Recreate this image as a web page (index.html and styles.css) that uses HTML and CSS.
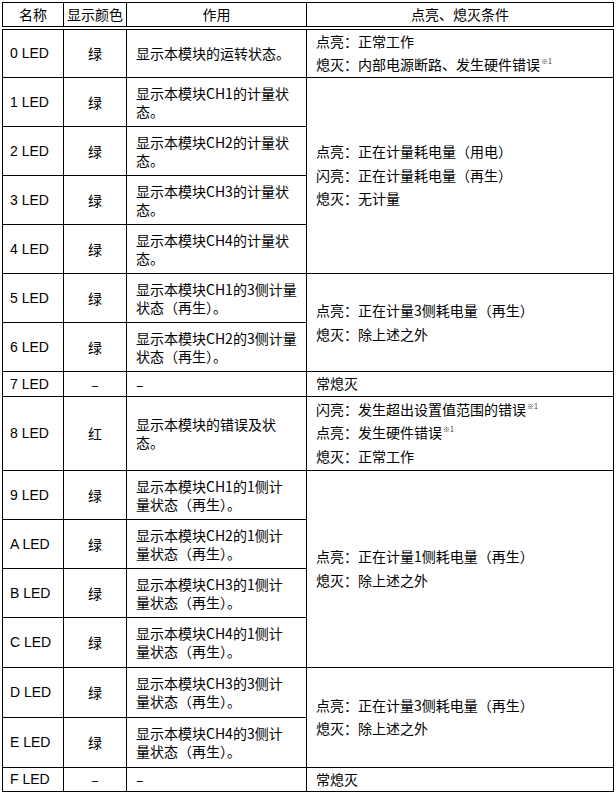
FILE: index.html
```html
<!DOCTYPE html>
<html lang="zh-CN">
<head>
<meta charset="utf-8">
<title>LED 显示</title>
<link rel="stylesheet" href="styles.css">
</head>
<body>
<div class="wrap">
<table class="led">
  <colgroup>
    <col class="c-name"><col class="c-color"><col class="c-func"><col class="c-cond">
  </colgroup>
  <thead>
    <tr class="r-head">
      <th>名称</th><th>显示颜色</th><th>作用</th><th>点亮、熄灭条件</th>
    </tr>
  </thead>
  <tbody>
    <tr class="r-50">
      <td class="name">0 LED</td><td class="color">绿</td>
      <td class="func">显示本模块的运转状态。</td>
      <td class="cond">点亮：正常工作<br>熄灭：内部电源断路、发生硬件错误<sup>※1</sup></td>
    </tr>
    <tr class="r-49">
      <td class="name">1 LED</td><td class="color">绿</td>
      <td class="func">显示本模块CH1的计量状<br>态。</td>
      <td class="cond" rowspan="4">点亮：正在计量耗电量（用电）<br>闪亮：正在计量耗电量（再生）<br>熄灭：无计量</td>
    </tr>
    <tr class="r-49">
      <td class="name">2 LED</td><td class="color">绿</td>
      <td class="func">显示本模块CH2的计量状<br>态。</td>
    </tr>
    <tr class="r-49">
      <td class="name">3 LED</td><td class="color">绿</td>
      <td class="func">显示本模块CH3的计量状<br>态。</td>
    </tr>
    <tr class="r-49">
      <td class="name">4 LED</td><td class="color">绿</td>
      <td class="func">显示本模块CH4的计量状<br>态。</td>
    </tr>
    <tr class="r-49">
      <td class="name">5 LED</td><td class="color">绿</td>
      <td class="func">显示本模块CH1的3侧计量<br>状态（再生）。</td>
      <td class="cond" rowspan="2">点亮：正在计量3侧耗电量（再生）<br>熄灭：除上述之外</td>
    </tr>
    <tr class="r-49">
      <td class="name">6 LED</td><td class="color">绿</td>
      <td class="func">显示本模块CH2的3侧计量<br>状态（再生）。</td>
    </tr>
    <tr class="r-24">
      <td class="name">7 LED</td><td class="color">–</td>
      <td class="func">–</td>
      <td class="cond">常熄灭</td>
    </tr>
    <tr class="r-74">
      <td class="name">8 LED</td><td class="color">红</td>
      <td class="func">显示本模块的错误及状<br>态。</td>
      <td class="cond">闪亮：发生超出设置值范围的错误<sup>※1</sup><br>点亮：发生硬件错误<sup>※1</sup><br>熄灭：正常工作</td>
    </tr>
    <tr class="r-49">
      <td class="name">9 LED</td><td class="color">绿</td>
      <td class="func">显示本模块CH1的1侧计<br>量状态（再生）。</td>
      <td class="cond" rowspan="4">点亮：正在计量1侧耗电量（再生）<br>熄灭：除上述之外</td>
    </tr>
    <tr class="r-49">
      <td class="name">A LED</td><td class="color">绿</td>
      <td class="func">显示本模块CH2的1侧计<br>量状态（再生）。</td>
    </tr>
    <tr class="r-49">
      <td class="name">B LED</td><td class="color">绿</td>
      <td class="func">显示本模块CH3的1侧计<br>量状态（再生）。</td>
    </tr>
    <tr class="r-50">
      <td class="name">C LED</td><td class="color">绿</td>
      <td class="func">显示本模块CH4的1侧计<br>量状态（再生）。</td>
    </tr>
    <tr class="r-50">
      <td class="name">D LED</td><td class="color">绿</td>
      <td class="func">显示本模块CH3的3侧计<br>量状态（再生）。</td>
      <td class="cond" rowspan="2">点亮：正在计量3侧耗电量（再生）<br>熄灭：除上述之外</td>
    </tr>
    <tr class="r-50">
      <td class="name">E LED</td><td class="color">绿</td>
      <td class="func">显示本模块CH4的3侧计<br>量状态（再生）。</td>
    </tr>
    <tr class="r-24">
      <td class="name">F LED</td><td class="color">–</td>
      <td class="func">–</td>
      <td class="cond">常熄灭</td>
    </tr>
  </tbody>
</table>
</div>
</body>
</html>
```
FILE: styles.css
```css
html, body {
  margin: 0;
  padding: 0;
  background: #ffffff;
}

.wrap {
  padding: 2px 3px 0 2px;
}

.led {
  width: 611px;
  table-layout: fixed;
  border-collapse: collapse;
  font-family: "Noto Sans CJK SC", "Liberation Sans", sans-serif;
  font-size: 14px;
  color: #000;
  border: 1.5px solid #000;
}

.c-name { width: 61px; }
.c-color { width: 63px; }
.c-func { width: 180px; }
.c-cond { width: 307px; }

.led th,
.led td {
  border: 1px solid #000;
  padding: 0;
  vertical-align: middle;
  white-space: nowrap;
}

.led th {
  font-weight: normal;
  text-align: center;
  line-height: 18px;
  border-bottom: 4px double #000;
}

.r-head { height: 25px; }
.r-24 { height: 24px; }
.r-49 { height: 49px; }
.r-50 { height: 50px; }
.r-74 { height: 74px; }

.name {
  padding-left: 7px !important;
  line-height: 18px;
  font-family: "Liberation Sans", "Noto Sans CJK SC", sans-serif;
}

.color {
  text-align: center;
  line-height: 18px;
}

.func {
  padding-left: 9px !important;
  line-height: 18px;
}

.cond {
  padding-left: 9px !important;
  line-height: 23.5px;
}

.cond sup {
  font-size: 7px;
  line-height: 0;
  vertical-align: 6px;
  margin-left: 1px;
  color: #333;
}
```
